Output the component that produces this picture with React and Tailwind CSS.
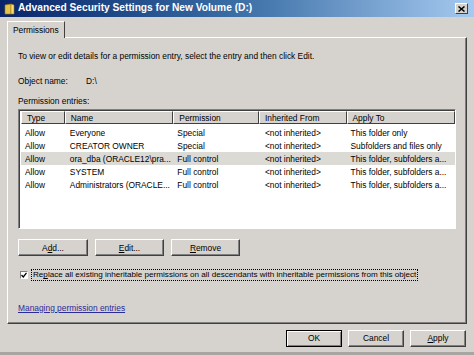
import React from "react";

const rows = [
  { type: "Allow", name: "Everyone", perm: "Special", inh: "<not inherited>", apply: "This folder only" },
  { type: "Allow", name: "CREATOR OWNER", perm: "Special", inh: "<not inherited>", apply: "Subfolders and files only" },
  { type: "Allow", name: "ora_dba (ORACLE12\\pra...", perm: "Full control", inh: "<not inherited>", apply: "This folder, subfolders a...", sel: true },
  { type: "Allow", name: "SYSTEM", perm: "Full control", inh: "<not inherited>", apply: "This folder, subfolders a..." },
  { type: "Allow", name: "Administrators (ORACLE...", perm: "Full control", inh: "<not inherited>", apply: "This folder, subfolders a..." },
];

const cols = [
  { label: "Type", w: "w-[44px]" },
  { label: "Name", w: "w-[109px]" },
  { label: "Permission", w: "w-[86px]" },
  { label: "Inherited From", w: "w-[88px]" },
  { label: "Apply To", w: "w-[109px]" },
];

function Btn({ children, className = "", def }) {
  return (
    <button
      className={`h-[17px] flex items-center justify-center bg-[#d6d3ce] text-black border ${
        def ? "border-black shadow-[inset_1px_1px_0_#fff,inset_-1px_-1px_0_#808080]" : "border-t-white border-l-white border-r-[#404040] border-b-[#404040] shadow-[inset_-1px_-1px_0_#808080]"
      } ${className}`}
    >
      {children}
    </button>
  );
}

function FolderIcon() {
  return (
    <svg width="11" height="12" viewBox="0 0 11 12">
      <path d="M1 2 L7 1 L7 11 L1 11 Z" fill="#e8c34a" stroke="#a07a10" strokeWidth="0.6" />
      <path d="M7 1 L10 2 L10 11 L7 11 Z" fill="#f5dd7a" stroke="#a07a10" strokeWidth="0.6" />
    </svg>
  );
}

export default function App() {
  return (
    <div
      className="w-[474px] h-[355px] bg-[#d6d3ce] text-black text-[8.4px] leading-none flex flex-col overflow-hidden"
      style={{ fontFamily: '"Liberation Sans", Arial, sans-serif' }}
    >
      {/* Title bar */}
      <div className="h-[17px] shrink-0 flex items-center pl-[4px] pr-[6px] bg-gradient-to-r from-[#0a246a] via-[#3a6ea5] to-[#a6caf0]">
        <FolderIcon />
        <span className="ml-[3px] text-white font-bold text-[10.2px]">Advanced Security Settings for New Volume (D:)</span>
        <div className="ml-auto w-[13px] h-[11px] bg-[#d6d3ce] border border-t-white border-l-white border-r-[#404040] border-b-[#404040] flex items-center justify-center">
          <svg width="7" height="6" viewBox="0 0 7 6">
            <path d="M0.5 0.5 L6.5 5.5 M6.5 0.5 L0.5 5.5" stroke="#000" strokeWidth="1.5" />
          </svg>
        </div>
      </div>

      {/* Tab */}
      <div className="flex pl-[7px] pt-[3px] shrink-0">
        <div className="h-[17px] px-[5px] flex items-center border border-b-0 border-t-white border-l-white border-r-[#404040] bg-[#d6d3ce] relative top-[1px]">
          Permissions
        </div>
      </div>

      {/* Panel */}
      <div className="ml-[7px] mr-[7px] h-[287px] shrink-0 border border-t-white border-l-white border-r-[#404040] border-b-[#404040] shadow-[inset_-1px_-1px_0_#808080] px-[10px] pt-[14px] flex flex-col">
        <div>To view or edit details for a permission entry, select the entry and then click Edit.</div>
        <div className="flex mt-[17px]">
          <span className="w-[68px]">Object name:</span>
          <span>D:\</span>
        </div>
        <div className="mt-[11px]">Permission entries:</div>

        {/* List view */}
        <div className="mt-[4px] w-[438px] h-[120px] bg-white border border-t-[#808080] border-l-[#808080] border-r-white border-b-white shadow-[inset_1px_1px_0_#404040] pl-[2px] pt-[1px]">
          <div className="flex h-[13px]">
            {cols.map((c) => (
              <div
                key={c.label}
                className={`${c.w} h-[13px] flex items-center pl-[5px] bg-[#d6d3ce] border border-t-white border-l-white border-r-[#404040] border-b-[#404040]`}
              >
                {c.label}
              </div>
            ))}
          </div>
          <div className="mt-[2px] flex flex-col">
            {rows.map((r) => (
              <div key={r.name} className={`flex h-[13px] items-center ${r.sel ? "bg-[#dcdad5]" : ""}`}>
                <span className="w-[44px] pl-[4px]">{r.type}</span>
                <span className="w-[109px] pl-[5px]">{r.name}</span>
                <span className="w-[86px] pl-[4px]">{r.perm}</span>
                <span className="w-[88px] pl-[6px]">{r.inh}</span>
                <span className="w-[109px] pl-[4px]">{r.apply}</span>
              </div>
            ))}
          </div>
        </div>

        <div className="flex mt-[10px] gap-[7px]">
          <Btn className="w-[70px]"><span>A<u>d</u>d...</span></Btn>
          <Btn className="w-[69px]"><span><u>E</u>dit...</span></Btn>
          <Btn className="w-[69px]"><span><u>R</u>emove</span></Btn>
        </div>

        <div className="flex items-center mt-[13px]">
          <div className="w-[8px] h-[8px] ml-[2px] bg-white border border-t-[#808080] border-l-[#808080] border-r-white border-b-white flex items-center justify-center">
            <svg width="6" height="6" viewBox="0 0 6 6">
              <path d="M0.5 3 L2.3 5 L5.5 0.8" stroke="#000" strokeWidth="1.3" fill="none" />
            </svg>
          </div>
          <span className="ml-[3px] px-[1px] py-[1px] border border-dotted border-black whitespace-nowrap text-[8.1px]">
            Re<u>p</u>lace all existing inheritable permissions on all descendants with inheritable permissions from this object
          </span>
        </div>

        <div className="mt-auto mb-[11px] text-[#2b2b9a] underline">Managing permission entries</div>
      </div>

      {/* Bottom buttons */}
      <div className="flex justify-end gap-[6px] pr-[8px] mt-[6px]">
        <Btn def className="w-[56px]">OK</Btn>
        <Btn className="w-[56px]">Cancel</Btn>
        <Btn className="w-[56px]"><span><u>A</u>pply</span></Btn>
      </div>
      <div className="mt-auto h-[3px] bg-[#a8a6a2]" />
    </div>
  );
}
